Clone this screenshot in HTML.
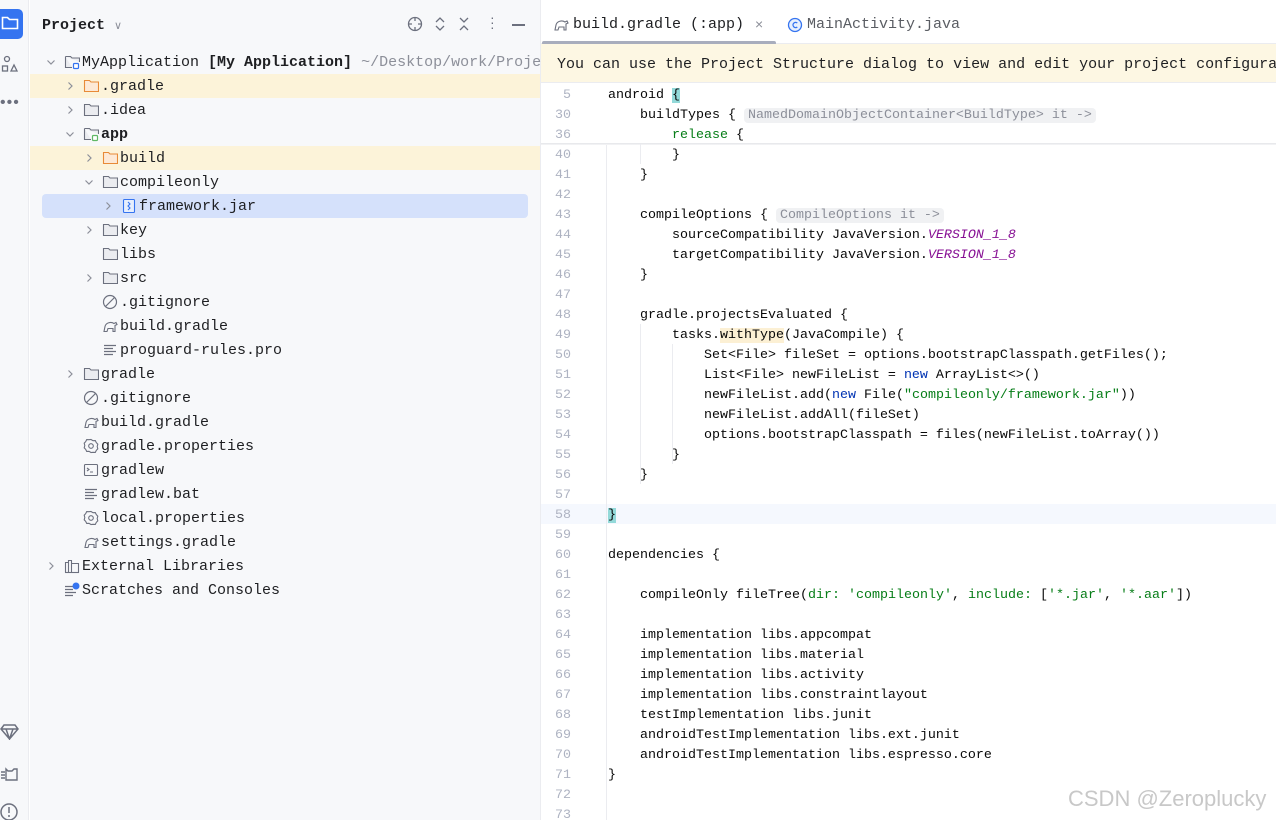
<!DOCTYPE html>
<html><head><meta charset="utf-8">
<style>
*{margin:0;padding:0;box-sizing:border-box}
body{width:1276px;height:820px;overflow:hidden;background:#fff;font-family:"Liberation Mono",monospace;color:#1e1f22;position:relative}
.strip{position:absolute;left:0;top:0;width:29px;height:820px;background:#f7f8fa;border-right:1px solid #ebecf0}
.proj{position:absolute;left:30px;top:0;width:511px;height:820px;background:#f7f8fa;border-right:1px solid #ebecf0}
.row{position:absolute;left:0;width:510px;height:24px;font-size:15px;line-height:24px;white-space:nowrap}
.ed{position:absolute;left:541px;top:0;right:0;height:820px;background:#fff}
.ln{position:absolute;left:541px;width:30px;text-align:right;font-size:13.33px;line-height:20px;padding-top:2px;color:#aeb3c2}
.cl{position:absolute;left:608px;font-size:13.33px;line-height:20px;padding-top:2px;white-space:pre;color:#080808}
.k{color:#0033b3}.s{color:#067d17}.p{color:#871094;font-style:italic}.g{color:#067d17}
.hint{background:#f0f1f3;color:#8c8f99;border-radius:4px;padding:0 4px}
</style></head><body>
<div class="strip">
 <div style="position:absolute;left:0;top:9px;width:23px;height:30px;background:#3574f0;border-radius:0 5px 5px 0"></div>
 <svg style="position:absolute;left:1px;top:15px" width="18" height="16" viewBox="0 0 18 16"><path d="M1.5 2.5h5l2 2h8v9h-15z" fill="none" stroke="#fff" stroke-width="1.6"/></svg>
 <svg style="position:absolute;left:1px;top:55px" width="18" height="18" viewBox="0 0 18 18" fill="none" stroke="#6c707e" stroke-width="1.3"><circle cx="6" cy="4" r="2.5"/><rect x="1.5" y="11" width="5" height="5"/><path d="M10 16l3-6 3 6z"/></svg>
 <div style="position:absolute;left:0;top:94px;font-size:16px;color:#6c707e;letter-spacing:1px;font-family:'Liberation Sans'">•••</div>
 <svg style="position:absolute;left:0;top:724px" width="19" height="16" viewBox="0 0 19 16" fill="none" stroke="#6c707e" stroke-width="1.5"><path d="M4 1h11l3 4-8.5 10L1 5z M1 5h17 M6 5l3.5 10L13 5"/></svg>
 <svg style="position:absolute;left:0;top:765px" width="19" height="17" viewBox="0 0 19 17" fill="none" stroke="#6c707e" stroke-width="1.4"><path d="M6 4l2 2h4l2-2 3 0v11H6z M1 7h4 M1 10h4 M1 13h4"/></svg>
 <svg style="position:absolute;left:0;top:802px" width="18" height="18" viewBox="0 0 18 18" fill="none" stroke="#6c707e" stroke-width="1.5"><circle cx="9" cy="10" r="8"/><path d="M9 5v6 M9 13v2"/></svg>
</div>
<div class="proj">
 <div style="position:absolute;left:12px;top:17px;font-size:15px;font-weight:bold">Project <span style="font-weight:normal;color:#8c8f99;font-size:11px">∨</span></div>
 <svg style="position:absolute;left:377px;top:16px" width="16" height="16" viewBox="0 0 16 16" fill="none" stroke="#6c707e" stroke-width="1.3"><circle cx="8" cy="8" r="6.5"/><path d="M8 1v4M8 11v4M1 8h4M11 8h4"/></svg>
 <svg style="position:absolute;left:404px;top:16px" width="12" height="16" viewBox="0 0 12 16" fill="none" stroke="#6c707e" stroke-width="1.3"><path d="M2 6l4-4 4 4M2 10l4 4 4-4"/></svg>
 <svg style="position:absolute;left:428px;top:16px" width="12" height="16" viewBox="0 0 12 16" fill="none" stroke="#6c707e" stroke-width="1.3"><path d="M2 2l4 4 4-4M2 14l4-4 4 4"/></svg>
 <div style="position:absolute;left:460px;top:15px;width:3px;height:16px;font-size:14px;color:#6c707e;line-height:5px;font-family:'Liberation Sans'">·<br>·<br>·</div>
 <div style="position:absolute;left:482px;top:24px;width:13px;height:1.5px;background:#6c707e"></div>
</div>
<div style="position:absolute;left:30px;top:74px;width:510px;height:24px;background:#fcf3d9"></div>
<div style="position:absolute;left:30px;top:146px;width:510px;height:24px;background:#fcf3d9"></div>
<div style="position:absolute;left:42px;top:194px;width:486px;height:24px;background:#d5e1fb;border-radius:4px"></div>
<div id="tree" style="position:absolute;left:30px;top:0"></div>

<div class="ed"></div>
<div style="position:absolute;left:541px;top:0;right:0;height:44px;border-bottom:1px solid #ebecf0"></div>
<div style="position:absolute;left:542px;top:41px;width:234px;height:4px;background:#a8adbd;border-radius:2px"></div>
<svg style="position:absolute;left:553px;top:18px" width="16" height="13" viewBox="0 0 16 13" fill="none" stroke="#6c707e" stroke-width="1.1"><path d="M2 12l1-5c1-4 6-5 9-3l2-1 1 2-2 1 0 6h-2l0-3h-5l-1 3z"/></svg>
<div style="position:absolute;left:573px;top:16px;font-size:15px">build.gradle (:app)</div>
<div style="position:absolute;left:755px;top:16px;font-size:14px;color:#8c8f99;font-family:'Liberation Sans'">×</div>
<svg style="position:absolute;left:787px;top:17px" width="16" height="16" viewBox="0 0 16 16" fill="none" stroke="#3574f0" stroke-width="1.3"><circle cx="8" cy="8" r="6.5" fill="#e7effd"/><path d="M10.3 6a2.6 2.6 0 1 0 0 4"/></svg>
<div style="position:absolute;left:807px;top:16px;font-size:15px;color:#5a5d63">MainActivity.java</div>
<div style="position:absolute;left:541px;top:44px;right:0;height:39px;background:#fdf7e3;border-bottom:1px solid #ebecf0"></div>
<div style="position:absolute;left:557px;top:56px;font-size:15px;white-space:nowrap">You can use the Project Structure dialog to view and edit your project configuration</div>
<div style="position:absolute;left:541px;top:504px;right:0;height:20px;background:#f5f8fe"></div>
<div style="position:absolute;left:606px;top:144px;width:1px;height:676px;background:#ebecf0"></div>
<div style="position:absolute;left:541px;top:143px;right:0;height:2px;background:linear-gradient(#e3e4e8,#f6f6f8)"></div>
<div id="code"></div>
<div style="position:absolute;left:1068px;top:786px;font-family:'Liberation Sans',sans-serif;font-size:22px;color:#c8c8c8">CSDN @Zeroplucky</div>

<script>
const F='<path d="M1.5 2.5h5l1.5 1.5h7.5v9.5h-14z" fill="C" stroke="S" stroke-width="1.1"/>';
function folder(c,s){return '<svg width="16" height="16" viewBox="0 0 16 16">'+F.replace('C',c).replace('S',s)+'</svg>';}
const ic={
 of:folder('#fde9d6','#e88a37'), f:folder('#ebecf0','#6c707e'),
 mod:'<svg width="16" height="16" viewBox="0 0 16 16"><path d="M1.5 2.5h5l1.5 1.5h7.5v4M8 13.5H1.5v-11" fill="#ebecf0" stroke="#6c707e" stroke-width="1.1"/><rect x="9.5" y="9.5" width="5" height="5" rx="1" fill="#fff" stroke="#3574f0" stroke-width="1.2"/></svg>',
 app:'<svg width="16" height="16" viewBox="0 0 16 16"><path d="M1.5 2.5h5l1.5 1.5h7.5v4M8 13.5H1.5v-11" fill="#ebecf0" stroke="#6c707e" stroke-width="1.1"/><rect x="9.5" y="9.5" width="5" height="5" rx="1" fill="#fff" stroke="#5fb865" stroke-width="1.2"/></svg>',
 jar:'<svg width="16" height="16" viewBox="0 0 16 16" fill="none" stroke="#3574f0" stroke-width="1.1"><rect x="2.5" y="1.5" width="11" height="13" rx="1" fill="#e7effd"/><path d="M7 4l2 2-2 2 2 2-2 2"/></svg>',
 no:'<svg width="16" height="16" viewBox="0 0 16 16" fill="none" stroke="#6c707e" stroke-width="1.2"><circle cx="8" cy="8" r="6.5"/><path d="M3.5 12.5l9-9"/></svg>',
 gr:'<svg width="16" height="16" viewBox="0 0 16 13" fill="none" stroke="#6c707e" stroke-width="1.1"><path d="M2 12l1-5c1-4 6-5 9-3l2-1 1 2-2 1 0 6h-2l0-3h-5l-1 3z"/></svg>',
 txt:'<svg width="16" height="16" viewBox="0 0 16 16" stroke="#6c707e" stroke-width="1.2"><path d="M2 3.5h12M2 6.5h9M2 9.5h12M2 12.5h9"/></svg>',
 gear:'<svg width="16" height="16" viewBox="0 0 16 16" fill="none" stroke="#6c707e" stroke-width="1.1"><path d="M8 1.5l2 1.2 2.3-.1 1 2 1.5 1.6-.6 2.3.6 2.3-1.5 1.6-1 2-2.3-.1L8 14.5l-2-1.2-2.3.1-1-2L1.2 9.8 1.8 7.5 1.2 5.2 2.7 3.6l1-2 2.3.1z"/><circle cx="8" cy="8" r="2.3"/></svg>',
 term:'<svg width="16" height="16" viewBox="0 0 16 16" fill="none" stroke="#6c707e" stroke-width="1.1"><rect x="1.5" y="2.5" width="13" height="11" rx="1"/><path d="M4 6l2 1.5L4 9M7 10h3"/></svg>',
 lib:'<svg width="16" height="16" viewBox="0 0 16 16" fill="none" stroke="#6c707e" stroke-width="1.1"><path d="M1.5 14.5v-10h3v10M4.5 14.5v-12h3v12M7.5 14.5h7v-9h-7"/><path d="M1 14.5h14"/></svg>',
 scr:'<svg width="16" height="16" viewBox="0 0 16 16"><path d="M1 4.5h8M1 7.5h8M1 10.5h11M1 13.5h8" stroke="#6c707e" stroke-width="1.2"/><circle cx="12" cy="4" r="3.5" fill="#3574f0"/></svg>'
};
const T=[
 [0,'v','mod','MyApplication <b>[My Application]</b> <span style="color:#8c8f99">~/Desktop/work/Projects/MyApplication</span>'],
 [1,'>','of','.gradle'],[1,'>','f','.idea'],[1,'v','app','<b>app</b>'],
 [2,'>','of','build'],[2,'v','f','compileonly'],[3,'>','jar','framework.jar'],
 [2,'>','f','key'],[2,'','f','libs'],[2,'>','f','src'],[2,'','no','.gitignore'],[2,'','gr','build.gradle'],[2,'','txt','proguard-rules.pro'],
 [1,'>','f','gradle'],[1,'','no','.gitignore'],[1,'','gr','build.gradle'],[1,'','gear','gradle.properties'],[1,'','term','gradlew'],[1,'','txt','gradlew.bat'],[1,'','gear','local.properties'],[1,'','gr','settings.gradle'],
 [0,'>','lib','External Libraries'],[0,'','scr','Scratches and Consoles']];
let h='';
T.forEach((r,i)=>{const L=r[0],cx=16+19*L,ix=34+19*L,tx=52+19*L;
 let ch=r[1]?'<svg style="left:'+cx+'px;top:7px;position:absolute" width="10" height="10" viewBox="0 0 10 10" fill="none" stroke="#8c8f99" stroke-width="1.2"><path d="'+(r[1]=='v'?'M1.5 3.5l3.5 3.5 3.5-3.5':'M3.5 1.5l3.5 3.5-3.5 3.5')+'"/></svg>':'';
 h+='<div class="row" style="top:'+(50+24*i)+'px">'+ch+'<span style="position:absolute;left:'+ix+'px;top:0">'+ic[r[2]].replace('<svg','<svg style="position:absolute;top:4px"')+'</span><span style="position:absolute;left:'+tx+'px;top:1px">'+r[3]+'</span></div>';});
document.getElementById('tree').innerHTML=h;
const C=[
[5,84,'android <span style="background:#93d9d9">{</span>'],
[30,104,'    buildTypes { <span class="hint">NamedDomainObjectContainer&lt;BuildType&gt; it -&gt;</span>'],
[36,124,'        <span class="g">release</span> {'],
[40,0,'        }'],[41,0,'    }'],[42,0,''],
[43,0,'    compileOptions { <span class="hint">CompileOptions it -&gt;</span>'],
[44,0,'        sourceCompatibility JavaVersion.<span class="p">VERSION_1_8</span>'],
[45,0,'        targetCompatibility JavaVersion.<span class="p">VERSION_1_8</span>'],
[46,0,'    }'],[47,0,''],
[48,0,'    gradle.projectsEvaluated {'],
[49,0,'        tasks.<span style="background:#fcf0d4">withType</span>(JavaCompile) {'],
[50,0,'            Set&lt;File&gt; fileSet = options.bootstrapClasspath.getFiles();'],
[51,0,'            List&lt;File&gt; newFileList = <span class="k">new</span> ArrayList&lt;&gt;()'],
[52,0,'            newFileList.add(<span class="k">new</span> File(<span class="s">"compileonly/framework.jar"</span>))'],
[53,0,'            newFileList.addAll(fileSet)'],
[54,0,'            options.bootstrapClasspath = files(newFileList.toArray())'],
[55,0,'        }'],[56,0,'    }'],[57,0,''],
[58,0,'<span style="background:#93d9d9">}</span>'],[59,0,''],
[60,0,'dependencies {'],[61,0,''],
[62,0,'    compileOnly fileTree(<span class="g">dir:</span> <span class="s">\'compileonly\'</span>, <span class="g">include:</span> [<span class="s">\'*.jar\'</span>, <span class="s">\'*.aar\'</span>])'],
[63,0,''],
[64,0,'    implementation libs.appcompat'],[65,0,'    implementation libs.material'],[66,0,'    implementation libs.activity'],[67,0,'    implementation libs.constraintlayout'],
[68,0,'    testImplementation libs.junit'],[69,0,'    androidTestImplementation libs.ext.junit'],[70,0,'    androidTestImplementation libs.espresso.core'],
[71,0,'}'],[72,0,''],[73,0,'']];
let c='';
C.forEach(r=>{const t=r[0]>=40?144+(r[0]-40)*20:r[1];
 c+='<div class="ln" style="top:'+t+'px">'+r[0]+'</div><div class="cl" style="top:'+t+'px">'+r[2]+'</div>';});
c+='<div style="position:absolute;left:640px;top:144px;width:1px;height:20px;background:#ebecf0"></div>';
c+='<div style="position:absolute;left:672px;top:344px;width:1px;height:120px;background:#ebecf0"></div>';
c+='<div style="position:absolute;left:640px;top:324px;width:1px;height:160px;background:#ebecf0"></div>';
document.getElementById('code').innerHTML=c;
</script>
</body></html>
